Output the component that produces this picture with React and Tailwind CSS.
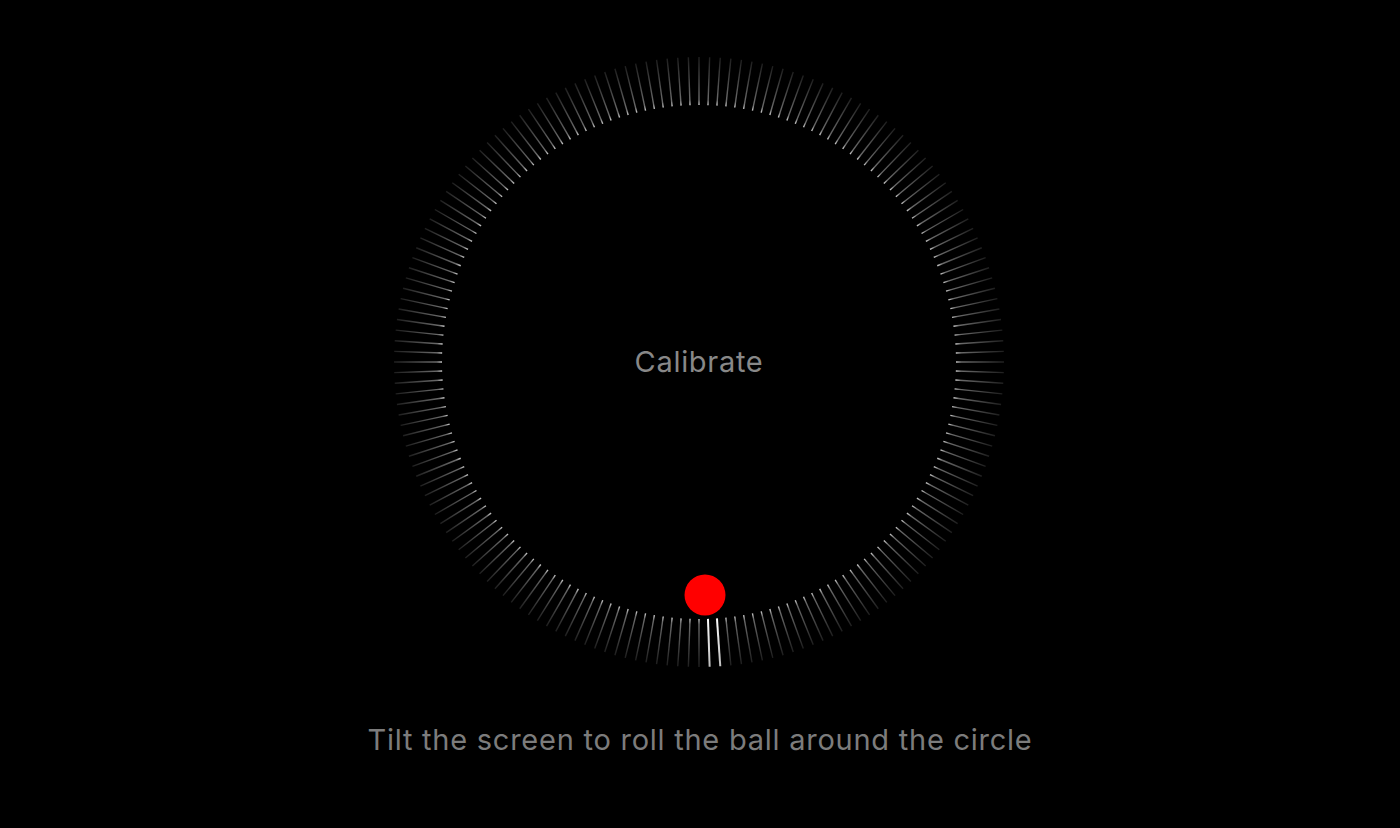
import React from 'react';

const TICKS = 180;
const CX = 310;
const CY = 310;
const R_IN = 257;
const R_OUT = 305;

function Dial() {
  const ticks = [];
  for (let i = 0; i < TICKS; i++) {
    const a = (i * 2 * Math.PI) / TICKS;
    const s = Math.sin(a);
    const c = Math.cos(a);
    // ticks just right of the bottom, under the ball
    const hot = i === 1 || i === 2;
    ticks.push(
      <line
        key={i}
        x1={CX + s * R_IN}
        y1={CY + c * R_IN}
        x2={CX + s * R_OUT}
        y2={CY + c * R_OUT}
        stroke={hot ? 'url(#hot)' : 'url(#fade)'}
        strokeWidth={hot ? 2 : 1.4}
      />
    );
  }
  return (
    <svg width="620" height="620" viewBox="0 0 620 620">
      <defs>
        <radialGradient id="fade" gradientUnits="userSpaceOnUse" cx={CX} cy={CY} r={R_OUT}>
          <stop offset="0.84" stopColor="#ffffff" stopOpacity="0.85" />
          <stop offset="0.86" stopColor="#ffffff" stopOpacity="0.42" />
          <stop offset="1" stopColor="#ffffff" stopOpacity="0.12" />
        </radialGradient>
        <radialGradient id="hot" gradientUnits="userSpaceOnUse" cx={CX} cy={CY} r={R_OUT}>
          <stop offset="0.84" stopColor="#ffffff" stopOpacity="1" />
          <stop offset="1" stopColor="#ffffff" stopOpacity="0.75" />
        </radialGradient>
      </defs>
      {ticks}
      <circle cx={CX + 6} cy={CY + 233} r="20.5" fill="#ff0000" />
    </svg>
  );
}

export default function App() {
  return (
    <div
      className="w-[1400px] h-[828px] bg-black flex flex-col items-center pt-[52px] overflow-hidden"
      style={{ fontFamily: 'Inter, "Liberation Sans", sans-serif' }}
    >
      <div className="relative w-[620px] h-[620px] -ml-[2px]">
        <Dial />
        <div className="absolute inset-0 flex items-center justify-center">
          <span className="text-[29px] text-[#888888] tracking-[0.7px]">Calibrate</span>
        </div>
      </div>
      <p className="mt-[50px] text-[29px] leading-[36px] text-[#7c7c7c] tracking-[0.75px]">
        Tilt the screen to roll the ball around the circle
      </p>
    </div>
  );
}
